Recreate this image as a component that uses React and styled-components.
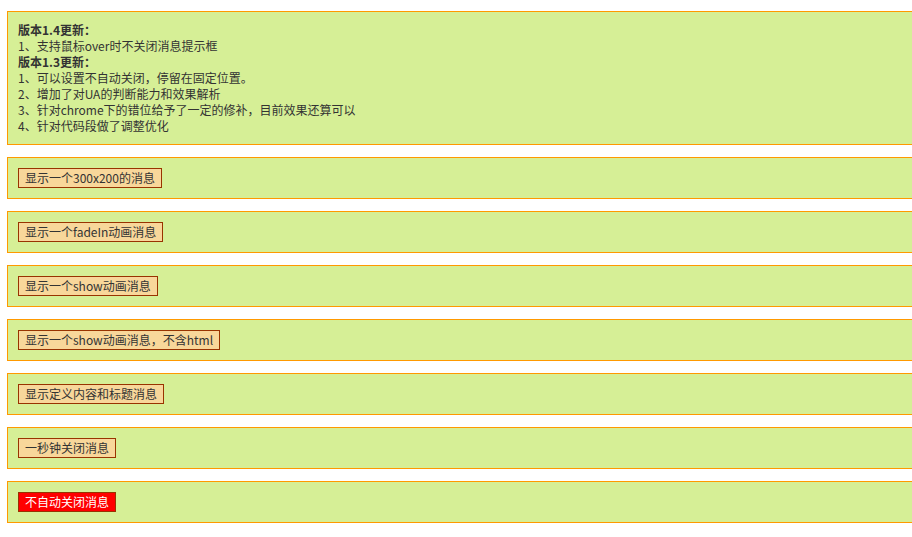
import React from 'react'
import styled, { createGlobalStyle } from 'styled-components'

const GlobalStyle = createGlobalStyle`
  html, body {
    margin: 0;
    padding: 0;
    background: #fff;
  }
  body {
    font-family: "Noto Sans CJK SC", "Microsoft YaHei", sans-serif;
    font-size: 12px;
    color: #333;
  }
`

const Page = styled.div`
  padding: 11px 0 0 7px;
  overflow: hidden;
`

// the boxes run off the right edge in the original, so the right border is clipped
const Box = styled.div`
  background: #d6ef96;
  border: 1px solid #ff9900;
  padding: 10px;
  margin: 0 -4px 12px 0;
  line-height: 16px;
`

const Strong = styled.div`
  font-weight: bold;
`

const Button = styled.button`
  display: inline-block;
  height: 20px;
  padding: 0 6px;
  margin: 0;
  font-family: inherit;
  font-size: 12px;
  line-height: 18px;
  vertical-align: top;
  border: 1px solid #993300;
  background: ${p => (p.$danger ? '#ff0000' : '#f8d79a')};
  color: ${p => (p.$danger ? '#fff' : '#333')};
  cursor: pointer;
`

const actions = [
  '显示一个300x200的消息',
  '显示一个fadeIn动画消息',
  '显示一个show动画消息',
  '显示一个show动画消息，不含html',
  '显示定义内容和标题消息',
  '一秒钟关闭消息',
]

export default function App() {
  return (
    <Page>
      <GlobalStyle />
      <Box>
        <Strong>版本1.4更新：</Strong>
        <div>1、支持鼠标over时不关闭消息提示框</div>
        <Strong>版本1.3更新：</Strong>
        <div>1、可以设置不自动关闭，停留在固定位置。</div>
        <div>2、增加了对UA的判断能力和效果解析</div>
        <div>3、针对chrome下的错位给予了一定的修补，目前效果还算可以</div>
        <div>4、针对代码段做了调整优化</div>
      </Box>
      {actions.map(a => (
        <Box key={a}>
          <Button>{a}</Button>
        </Box>
      ))}
      <Box>
        <Button $danger>不自动关闭消息</Button>
      </Box>
    </Page>
  )
}
